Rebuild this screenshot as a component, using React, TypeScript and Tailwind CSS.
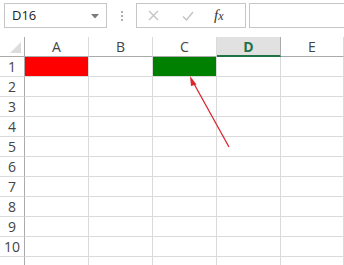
import React from "react";

const cols = ["A", "B", "C", "D", "E"];
const rows = [1, 2, 3, 4, 5, 6, 7, 8, 9, 10, 11];

export default function App() {
  return (
    <div
      className="relative w-[344px] h-[265px] overflow-hidden bg-white"
      style={{ fontFamily: '"Open Sans", "Noto Sans", sans-serif' }}
    >
      {/* toolbar */}
      <div className="flex items-start h-[37px] pt-[3px] pl-[4px]">
        <div className="relative w-[103px] h-[25px] border border-[#c6c6c6] flex items-center pl-[7px] text-[13px] text-[#222]">
          D16
          <svg className="absolute right-[7px] top-[10px]" width="8" height="5" viewBox="0 0 8 5">
            <path d="M0 0 L8 0 L4 4.5 Z" fill="#7a7a7a" />
          </svg>
        </div>
        <div className="w-[30px] h-[25px] flex flex-col items-center justify-center gap-[2px]">
          <div className="w-[2px] h-[2px] bg-[#b0b0b0]" />
          <div className="w-[2px] h-[2px] bg-[#b0b0b0]" />
          <div className="w-[2px] h-[2px] bg-[#b0b0b0]" />
        </div>
        <div className="ml-[-1px] w-[110px] h-[25px] border border-[#c6c6c6] flex items-center">
          <svg className="ml-[11px]" width="11" height="11" viewBox="0 0 11 11">
            <path d="M1 1 L10 10 M10 1 L1 10" stroke="#c4c4c4" strokeWidth="1.4" />
          </svg>
          <svg className="ml-[23px]" width="12" height="10" viewBox="0 0 12 10">
            <path d="M1 5.5 L4.5 9 L11 1" stroke="#c4c4c4" strokeWidth="1.4" fill="none" />
          </svg>
          <span
            className="ml-[20px] text-[15px] italic text-[#333] leading-none"
            style={{ fontFamily: '"Liberation Serif", serif' }}
          >
            f<span className="text-[12px]">x</span>
          </span>
        </div>
        <div className="ml-[3px] flex-1 h-[25px] border-l border-t border-b border-[#c6c6c6]" />
      </div>

      {/* grid */}
      <div className="grid grid-cols-[25px_64px_64px_64px_64px_63px]">
        {/* header row */}
        <div className="relative h-[20px] bg-white border-r border-b border-[#ababab]">
          <svg className="absolute right-[3px] bottom-[3px]" width="11" height="11" viewBox="0 0 11 11">
            <path d="M11 0 L11 11 L0 11 Z" fill="#dcdcdc" />
          </svg>
        </div>
        {cols.map((c) =>
          c === "D" ? (
            <div
              key={c}
              className="h-[20px] bg-[#e1e1e1] border-r border-[#ababab] border-b-2 border-b-[#217346] flex items-center justify-center text-[14px] font-bold text-[#217346]"
            >
              {c}
            </div>
          ) : (
            <div
              key={c}
              className="h-[20px] bg-white border-r border-[#dadada] border-b border-b-[#ababab] flex items-center justify-center text-[14px] text-[#444]"
            >
              {c}
            </div>
          )
        )}
        {rows.map((r) => (
          <React.Fragment key={r}>
            <div className="h-[20px] border-r border-[#ababab] border-b border-b-[#dadada] flex items-center justify-center text-[14px] text-[#444]">
              {r <= 10 ? r : ""}
            </div>
            {cols.map((c) => {
              let bg = "bg-white";
              if (r === 1 && c === "A") bg = "bg-[#ff0000]";
              if (r === 1 && c === "C") bg = "bg-[#008000]";
              return (
                <div
                  key={c}
                  className={`h-[20px] border-r border-b border-[#dadada] ${bg}`}
                />
              );
            })}
          </React.Fragment>
        ))}
      </div>

      {/* arrow annotation */}
      <svg className="absolute left-0 top-0 pointer-events-none" width="344" height="265">
        <line x1="229" y1="147" x2="193" y2="82" stroke="#d9272e" strokeWidth="1.3" />
        <path d="M190 76 L196.5 84.5 L191 86 Z" fill="#d9272e" />
      </svg>
    </div>
  );
}
